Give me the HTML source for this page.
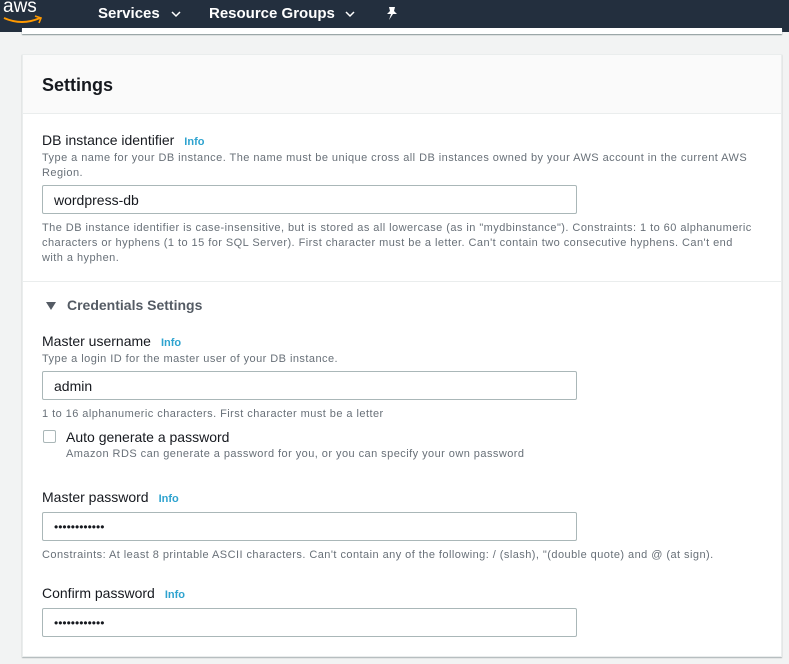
<!DOCTYPE html>
<html><head><style>
*{margin:0;padding:0;box-sizing:border-box}
body{width:789px;height:664px;overflow:hidden;background:#f2f3f3;font-family:"Liberation Sans",sans-serif;position:relative;color:#16191f}
.nav{position:absolute;left:0;top:0;width:789px;height:32px;background:#232f3e}
.nav span{position:absolute;color:#fff;font-weight:bold;font-size:15px;top:5px}
.strip{position:absolute;left:22px;top:28px;width:760px;height:6px;background:#fff;box-shadow:0 1px 1px #879596}
.panel{position:absolute;left:22px;top:54px;width:760px;height:603px;background:#fff;border:1px solid #eaeded;box-shadow:0 1px 1px rgba(0,28,36,.3)}
.hd{position:absolute;left:0;top:0;width:758px;height:59px;background:#fafafa;border-bottom:1px solid #eaeded}
.a{position:absolute;white-space:nowrap}
.t{font-size:18px;font-weight:bold}
.l{font-size:14px;color:#16191f}
.l b{color:#2ea3cf;font-size:11px;margin-left:10px}
.d{font-size:11px;color:#687078;line-height:15px;letter-spacing:.45px}
.in{position:absolute;left:19px;width:535px;height:29px;border:1px solid #aab7b8;border-radius:2px;font-size:14px;padding:6px 11px}
.dots{font-size:12px;letter-spacing:0;padding-top:7px}
</style></head><body>
<div class="nav">
<span style="left:3px;top:-4px;font-weight:normal;font-size:19px">aws</span>
<svg style="position:absolute;left:2px;top:15px" width="42" height="10"><path d="M2 3 Q20 11 38 3" stroke="#ff9900" stroke-width="2" fill="none"/><path d="M33 1 L39 3 L37 8" stroke="#ff9900" stroke-width="1.6" fill="none"/></svg>
<span style="left:98px">Services</span>
<svg style="position:absolute;left:171px;top:10px" width="10" height="8"><path d="M1 2 L5 6 L9 2" stroke="#fff" stroke-width="1.5" fill="none"/></svg>
<span style="left:209px">Resource Groups</span>
<svg style="position:absolute;left:345px;top:10px" width="10" height="8"><path d="M1 2 L5 6 L9 2" stroke="#fff" stroke-width="1.5" fill="none"/></svg>
<svg style="position:absolute;left:385px;top:5px" width="16" height="16"><path d="M4 2 L10 2 L9 6 L12 9 L8 9 L4 15 L6 9 L2 9 L5 6 Z" fill="#fff"/></svg>
</div>
<div class="strip"></div>
<div class="panel">
<div class="hd"><div class="a t" style="left:19px;top:20px">Settings</div></div>
<div class="a l" style="left:19px;top:77px">DB instance identifier<b>Info</b></div>
<div class="a d" style="left:19px;top:96px">Type a name for your DB instance. The name must be unique cross all DB instances owned by your AWS account in the current AWS<br>Region.</div>
<div class="in" style="top:130px">wordpress-db</div>
<div class="a d" style="left:19px;top:166px">The DB instance identifier is case-insensitive, but is stored as all lowercase (as in "mydbinstance"). Constraints: 1 to 60 alphanumeric<br>characters or hyphens (1 to 15 for SQL Server). First character must be a letter. Can't contain two consecutive hyphens. Can't end<br>with a hyphen.</div>
<div class="a" style="left:0;top:226px;width:758px;border-top:1px solid #eaeded"></div>
<svg class="a" style="left:22px;top:246px" width="12" height="10"><path d="M1 1 L11 1 L6 9 Z" fill="#545b64"/></svg>
<div class="a" style="left:44px;top:242px;font-size:14px;font-weight:bold;color:#545b64">Credentials Settings</div>
<div class="a l" style="left:19px;top:278px">Master username<b>Info</b></div>
<div class="a d" style="left:19px;top:297px">Type a login ID for the master user of your DB instance.</div>
<div class="in" style="top:316px">admin</div>
<div class="a d" style="left:19px;top:352px">1 to 16 alphanumeric characters. First character must be a letter</div>
<div class="a" style="left:20px;top:375px;width:13px;height:13px;border:1px solid #aab7b8;border-radius:2px"></div>
<div class="a l" style="left:43px;top:374px">Auto generate a password</div>
<div class="a d" style="left:43px;top:392px">Amazon RDS can generate a password for you, or you can specify your own password</div>
<div class="a l" style="left:19px;top:434px">Master password<b>Info</b></div>
<div class="in dots" style="top:457px">••••••••••••</div>
<div class="a d" style="left:19px;top:493px">Constraints: At least 8 printable ASCII characters. Can't contain any of the following: / (slash), "(double quote) and @ (at sign).</div>
<div class="a l" style="left:19px;top:530px">Confirm password<b>Info</b></div>
<div class="in dots" style="top:553px">••••••••••••</div>
</div>
</body></html>
